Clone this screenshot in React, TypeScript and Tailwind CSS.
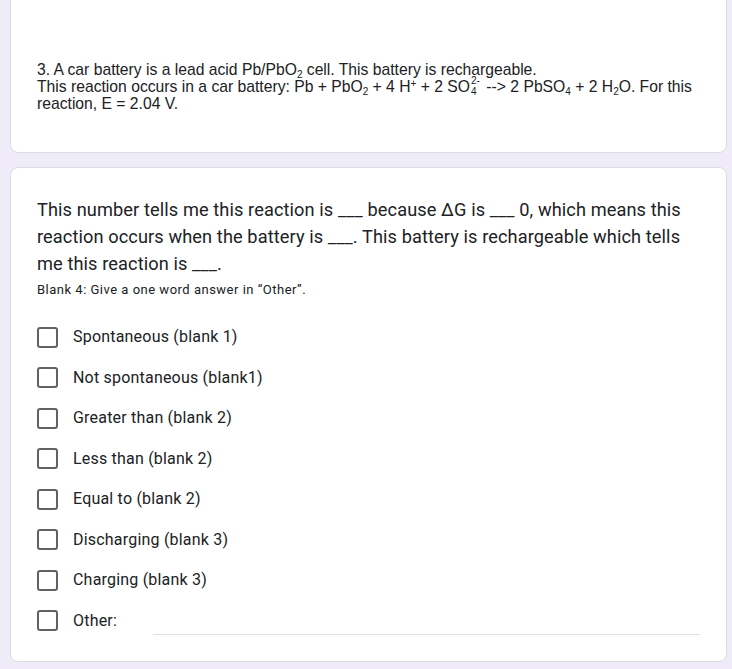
const options = [
  'Spontaneous (blank 1)',
  'Not spontaneous (blank1)',
  'Greater than (blank 2)',
  'Less than (blank 2)',
  'Equal to (blank 2)',
  'Discharging (blank 3)',
  'Charging (blank 3)',
]

const CheckBox = () => (
  <div className="w-[21px] h-[21px] shrink-0 rounded-[3px] border-[2.5px] border-[#5f6368]" />
)

// sub + sup stacked on the same spot (SO4 2-)
const SubSup = ({ sub, sup }: { sub: string; sup: string }) => (
  <span className="relative inline-block w-[12px] h-[1px] text-[10px] leading-none">
    <span className="absolute left-[1px] bottom-[6px]">{sup}</span>
    <span className="absolute left-[1px] -top-[4px]">{sub}</span>
  </span>
)

export default function App() {
  return (
    <div className="w-[732px] h-[669px] overflow-hidden bg-[#f0ebf8] pl-[10px] pr-[5px]">
      {/* header card, top edge is scrolled off */}
      <div
        className="-mt-[10px] bg-white rounded-lg border border-[#dadce0] pt-[70px] pb-[40px] pl-[26px] pr-[20px] text-[15.7px] leading-[17px] text-[#202124]"
        style={{ fontFamily: '"Liberation Sans", Arial, sans-serif' }}
      >
        <p>
          3. A car battery is a lead acid Pb/PbO<sub className="text-[10px]">2</sub> cell. This battery is rechargeable.
        </p>
        <p>
          This reaction occurs in a car battery: Pb + PbO<sub className="text-[10px]">2</sub> + 4 H
          <sup className="text-[10px]">+</sup> + 2 SO
          <SubSup sub="4" sup="2-" /> --&gt; 2 PbSO<sub className="text-[10px]">4</sub> + 2 H
          <sub className="text-[10px]">2</sub>O. For this reaction, E = 2.04 V.
        </p>
      </div>

      <div
        className="mt-[14px] bg-white rounded-lg border border-[#dadce0] pt-[28px] pl-[26px] pr-6 pb-[20px] text-[#202124]"
        style={{ fontFamily: 'Roboto, "Noto Sans", sans-serif' }}
      >
        <p className="text-[18.2px] leading-[27px] tracking-[0.1px]">
          This number tells me this reaction is ___ because ΔG is ___ 0, which means this reaction occurs when the
          battery is ___. This battery is rechargeable which tells me this reaction is ___.
        </p>
        <p className="text-[13px] leading-[18px] tracking-[0.5px] mt-[4px]">Blank 4: Give a one word answer in “Other”.</p>

        <div className="mt-[18px] flex flex-col">
          {options.map((o) => (
            <div key={o} className="h-[40.5px] flex items-center gap-[15px]">
              <CheckBox />
              <span className="text-[16px] tracking-[0.2px]">{o}</span>
            </div>
          ))}
          <div className="h-[40.5px] flex items-center gap-[15px]">
            <CheckBox />
            <span className="text-[16px] tracking-[0.2px] w-[65px]">Other:</span>
            <div className="flex-1 self-end mb-[6px] mr-[2px] h-[1.5px] bg-[#e0e0e0]" />
          </div>
        </div>
      </div>
    </div>
  )
}
